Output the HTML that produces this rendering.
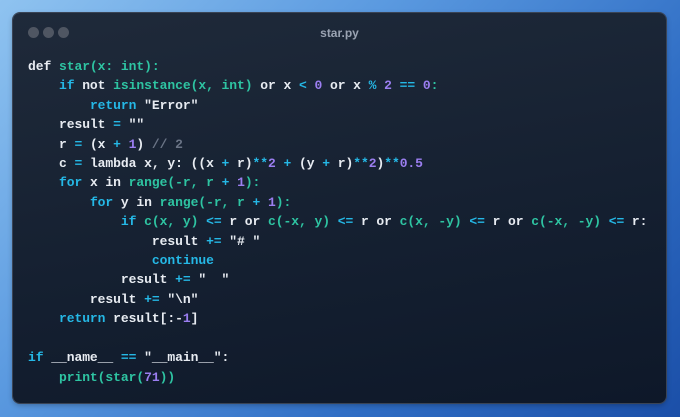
<!DOCTYPE html>
<html><head><meta charset="utf-8"><style>
html,body{margin:0;padding:0;}
body{width:680px;height:417px;overflow:hidden;background:linear-gradient(135deg,#8fc3f0 0%,#5b9ae0 35%,#2f6dc4 70%,#1b4fa8 100%);position:relative;font-family:"Liberation Sans",sans-serif;}
.win{position:absolute;left:13px;top:13px;width:653px;height:390px;border-radius:7px;background:linear-gradient(170deg,#1f2a3a 0%,#141f30 60%,#0e1829 100%);box-shadow:0 0 0 1px #3a4455,0 2px 6px rgba(0,0,0,.3);}
.dot{position:absolute;top:14px;width:11px;height:11px;border-radius:50%;background:#4f5662;}
.title{position:absolute;top:13px;left:0;width:100%;text-align:center;color:#9aa3b2;font-size:12px;font-weight:600;}
pre{position:absolute;left:15px;top:44px;margin:0;font-family:"Liberation Mono",monospace;font-size:13px;letter-spacing:-0.06px;line-height:19.4px;color:#e8ecf2;font-weight:bold;}
.k{color:#25b8e6}.f{color:#2ec4a2}.n{color:#9b7ef0}.c{color:#6a7486}.o{color:#25b8e6}
</style></head><body>
<div class="win">
<div class="dot" style="left:15px"></div><div class="dot" style="left:30px"></div><div class="dot" style="left:45px"></div>
<div class="title">star.py</div>
<pre>def <span class="f">star(x: int):</span>
    <span class="k">if</span> not <span class="f">isinstance(x, int)</span> or x <span class="o">&lt;</span> <span class="n">0</span> or x <span class="o">%</span> <span class="n">2</span> <span class="o">==</span> <span class="n">0</span><span class="f">:</span>
        <span class="k">return</span> "Error"
    result <span class="o">=</span> ""
    r <span class="o">=</span> (x <span class="o">+</span> <span class="n">1</span>) <span class="c">// 2</span>
    c <span class="o">=</span> lambda x, y: ((x <span class="o">+</span> r)<span class="o">**</span><span class="n">2</span> <span class="o">+</span> (y <span class="o">+</span> r)<span class="o">**</span><span class="n">2</span>)<span class="o">**</span><span class="n">0.5</span>
    <span class="k">for</span> x in <span class="f">range(-r, r</span> <span class="o">+</span> <span class="n">1</span><span class="f">):</span>
        <span class="k">for</span> y in <span class="f">range(-r, r</span> <span class="o">+</span> <span class="n">1</span><span class="f">):</span>
            <span class="k">if</span> <span class="f">c(x, y)</span> <span class="o">&lt;=</span> r or <span class="f">c(-x, y)</span> <span class="o">&lt;=</span> r or <span class="f">c(x, -y)</span> <span class="o">&lt;=</span> r or <span class="f">c(-x, -y)</span> <span class="o">&lt;=</span> r:
                result <span class="o">+=</span> "# "
                <span class="k">continue</span>
            result <span class="o">+=</span> "  "
        result <span class="o">+=</span> "\n"
    <span class="k">return</span> result[:-<span class="n">1</span>]

<span class="k">if</span> __name__ <span class="o">==</span> "__main__":
    <span class="f">print(star(</span><span class="n">71</span><span class="f">))</span></pre>
</div>
</body></html>
